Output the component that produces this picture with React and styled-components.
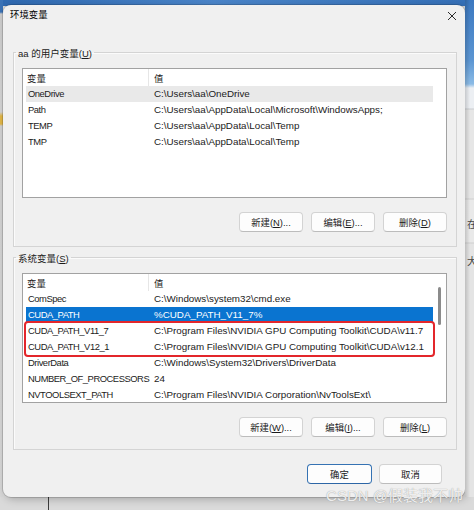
import React from "react";
import styled, { createGlobalStyle } from "styled-components";

const GlobalStyle = createGlobalStyle`
  html, body { margin: 0; padding: 0; background: #d9d9d9; }
  body { font-family: "Noto Sans", "Noto Sans CJK SC", sans-serif; }
  * { box-sizing: border-box; }
`;

const FONT = `"Liberation Sans", "Noto Sans CJK SC", sans-serif`;

const Desktop = styled.div`
  position: relative;
  width: 474px;
  height: 510px;
  overflow: hidden;
  display: flex;
  align-items: flex-start;
  font-family: ${FONT};
  background:
    linear-gradient(#3c3c3c, #3c3c3c) 48px 497px / 1px 13px no-repeat,
    linear-gradient(90deg, #2f69b1, #4b86cb 45%, #3570b8) 0 0 / 100% 6px no-repeat,
    #dadada;
`;

const LeftStrip = styled.div`
  width: 3px;
  height: 497px;
  background: linear-gradient(
    180deg,
    #3a72b6 0,
    #3a72b6 12px,
    #cfcfcf 14px,
    #d6d6d6 112px,
    #e3b848 116px,
    #e3b848 124px,
    #d3d3d3 126px,
    #d8d8d8 100%
  );
`;

const RightStrip = styled.div`
  width: 9px;
  height: 497px;
  padding-left: 2px;
  overflow: hidden;
  display: flex;
  flex-direction: column;
  color: #444;
  font-size: 10px;
  background:
    linear-gradient(90deg, rgba(0, 0, 0, 0.16), rgba(0, 0, 0, 0) 5px),
    linear-gradient(
      180deg,
      #3c78c0 0,
      #5b95d2 60px,
      #8bbbe6 84px,
      #eceff3 88px,
      #eceff3 108px,
      #c9ccd0 109px,
      #e6e6e6 110px,
      #e6e6e6 198px,
      #cfcfcf 199px,
      #e9e9e9 200px,
      #e9e9e9 242px,
      #cfcfcf 243px,
      #e4e4e4 244px,
      #e4e4e4 100%
    );
`;

const Glyph = styled.span`
  margin-top: ${(p) => p.$top}px;
  line-height: 12px;
  white-space: nowrap;
`;

const Dialog = styled.div`
  width: 462px;
  height: 492px;
  margin-top: 5px;
  padding: 0 8px 13px 10px;
  display: flex;
  flex-direction: column;
  background: #f0f0f0;
  border-radius: 8px;
  box-shadow: 0 0 0 1px rgba(0, 0, 0, 0.14), 2px 2px 8px rgba(0, 0, 0, 0.25);
  color: #1b1b1b;
  font-size: 9.8px;
`;

const TitleBar = styled.div`
  height: 37px;
  margin: 0 -8px 0 -10px;
  padding: 2px 8px 0 7px;
  display: flex;
  justify-content: space-between;
  align-items: flex-start;
`;

const Title = styled.div`
  line-height: 16px;
  font-size: 9.4px;
  color: #000;
`;

const CloseIcon = styled.svg`
  margin-top: 4px;
  width: 10px;
  height: 10px;
`;

const Group = styled.fieldset`
  margin: 0;
  min-width: 0;
  padding: 6px 9px ${(p) => p.$pb}px 8px;
  border: 1px solid #d4d4d4;
  box-shadow: inset 1px 1px 0 #fbfbfb;
`;

const Legend = styled.legend`
  margin-left: -6px;
  padding: 4px 2px 0;
  line-height: 16px;
  font-size: 9.5px;
  color: #1b1b1b;
`;

const Key = styled.span`
  text-decoration: underline;
  text-underline-offset: 1px;
`;

const ListBox = styled.div`
  height: 130px;
  display: flex;
  background: #fff;
  border: 1px solid #a2a2a2;
  overflow: hidden;
`;

const ListContent = styled.div`
  flex: 1;
  min-width: 0;
  padding-left: 3px;
`;

const ScrollTrack = styled.div`
  width: 13px;
`;

const Thumb = styled.div`
  margin: 13px 0 0 5px;
  width: 3px;
  height: 38px;
  border-radius: 2px;
  background: #8b8b8b;
`;

const HeaderRow = styled.div`
  height: 17px;
  display: grid;
  grid-template-columns: 123px 1fr;
  align-items: stretch;
`;

const HeaderCell = styled.div`
  display: flex;
  align-items: center;
  font-size: 9.4px;
  padding-left: ${(p) => (p.$first ? 1 : 5)}px;
  border-right: ${(p) => (p.$first ? "1px solid #e6e6e6" : "none")};
`;

const Row = styled.div`
  height: 16px;
  line-height: 16px;
  display: grid;
  grid-template-columns: 126px 1fr;
  white-space: nowrap;
  background: ${(p) =>
    p.$state === "selected" ? "#0a74d0" : p.$state === "hover" ? "#e9e9e9" : "transparent"};
  color: ${(p) => (p.$state === "selected" ? "#fff" : "#1b1b1b")};
`;

const Cell = styled.div`
  padding-left: 2px;
  overflow: hidden;
`;

const NameCell = styled(Cell)`
  font-size: 9.4px;
  letter-spacing: -0.45px;
  overflow: visible;
`;

const Marked = styled.div`
  outline: 2px solid #e3262b;
  outline-offset: 0;
  border-radius: 2px;
`;

const ButtonRow = styled.div`
  margin-top: 14px;
  display: flex;
  justify-content: flex-end;
  gap: ${(p) => p.$gap || 8}px;
  padding-right: ${(p) => p.$pr || 0}px;
`;

const Button = styled.button`
  width: ${(p) => p.$w || 64}px;
  height: 20px;
  padding: 0;
  font-family: ${FONT};
  font-size: 9.4px;
  color: #1b1b1b;
  background: #fdfdfd;
  border: 1px solid ${(p) => (p.$primary ? "#3572b3" : "#d3d3d3")};
  border-bottom-color: ${(p) => (p.$primary ? "#2d66a6" : "#bcbcbc")};
  border-radius: 4px;
`;

const Watermark = styled.div`
  position: absolute;
  right: 11px;
  bottom: 5px;
  font-family: "Liberation Sans", "Noto Sans CJK SC", sans-serif;
  font-size: 15px;
  line-height: 18px;
  color: rgba(250, 250, 250, 0.9);
  text-shadow: 0 0 1px #8a8a8a;
  white-space: nowrap;
`;

const userVars = [
  { name: "OneDrive", value: "C:\\Users\\aa\\OneDrive", state: "hover" },
  { name: "Path", value: "C:\\Users\\aa\\AppData\\Local\\Microsoft\\WindowsApps;" },
  { name: "TEMP", value: "C:\\Users\\aa\\AppData\\Local\\Temp" },
  { name: "TMP", value: "C:\\Users\\aa\\AppData\\Local\\Temp" },
];

const systemVars = [
  { name: "ComSpec", value: "C:\\Windows\\system32\\cmd.exe" },
  { name: "CUDA_PATH", value: "%CUDA_PATH_V11_7%", state: "selected" },
  { name: "CUDA_PATH_V11_7", value: "C:\\Program Files\\NVIDIA GPU Computing Toolkit\\CUDA\\v11.7", marked: true },
  { name: "CUDA_PATH_V12_1", value: "C:\\Program Files\\NVIDIA GPU Computing Toolkit\\CUDA\\v12.1", marked: true },
  { name: "DriverData", value: "C:\\Windows\\System32\\Drivers\\DriverData" },
  { name: "NUMBER_OF_PROCESSORS", value: "24" },
  { name: "NVTOOLSEXT_PATH", value: "C:\\Program Files\\NVIDIA Corporation\\NvToolsExt\\" },
];

function VarRow({ v }) {
  return (
    <Row $state={v.state}>
      <NameCell>{v.name}</NameCell>
      <Cell>{v.value}</Cell>
    </Row>
  );
}

function VarList({ items, scroll }) {
  const first = items.findIndex((v) => v.marked);
  const marked = items.filter((v) => v.marked);
  const before = first < 0 ? items : items.slice(0, first);
  const after = first < 0 ? [] : items.slice(first + marked.length);
  return (
    <ListBox>
      <ListContent>
        <HeaderRow>
          <HeaderCell $first>变量</HeaderCell>
          <HeaderCell>值</HeaderCell>
        </HeaderRow>
        {before.map((v) => (
          <VarRow key={v.name} v={v} />
        ))}
        {marked.length > 0 && (
          <Marked>
            {marked.map((v) => (
              <VarRow key={v.name} v={v} />
            ))}
          </Marked>
        )}
        {after.map((v) => (
          <VarRow key={v.name} v={v} />
        ))}
      </ListContent>
      <ScrollTrack>{scroll && <Thumb />}</ScrollTrack>
    </ListBox>
  );
}

function Actions({ keys }) {
  return (
    <ButtonRow>
      <Button>
        新建(<Key>{keys[0]}</Key>)...
      </Button>
      <Button>
        编辑(<Key>{keys[1]}</Key>)...
      </Button>
      <Button>
        删除(<Key>{keys[2]}</Key>)
      </Button>
    </ButtonRow>
  );
}

export default function App() {
  return (
    <>
      <GlobalStyle />
      <Desktop>
        <LeftStrip />
        <Dialog>
          <TitleBar>
            <Title>环境变量</Title>
            <CloseIcon viewBox="0 0 10 10">
              <path d="M1 1 L9 9 M9 1 L1 9" stroke="#2b2b2b" strokeWidth="1" fill="none" />
            </CloseIcon>
          </TitleBar>

          <Group $pb={14}>
            <Legend>
              aa 的用户变量(<Key>U</Key>)
            </Legend>
            <VarList items={userVars} />
            <Actions keys={["N", "E", "D"]} />
          </Group>

          <Group $pb={12}>
            <Legend>
              系统变量(<Key>S</Key>)
            </Legend>
            <VarList items={systemVars} scroll />
            <Actions keys={["W", "I", "L"]} />
          </Group>

          <ButtonRow $gap={7} $pr={15}>
            <Button $primary $w={65}>确定</Button>
            <Button $w={63}>取消</Button>
          </ButtonRow>
        </Dialog>
        <RightStrip>
          <Glyph $top={219}>在</Glyph>
          <Glyph $top={25}>大</Glyph>
        </RightStrip>
        <Watermark>CSDN @假装我不帅</Watermark>
      </Desktop>
    </>
  );
}
